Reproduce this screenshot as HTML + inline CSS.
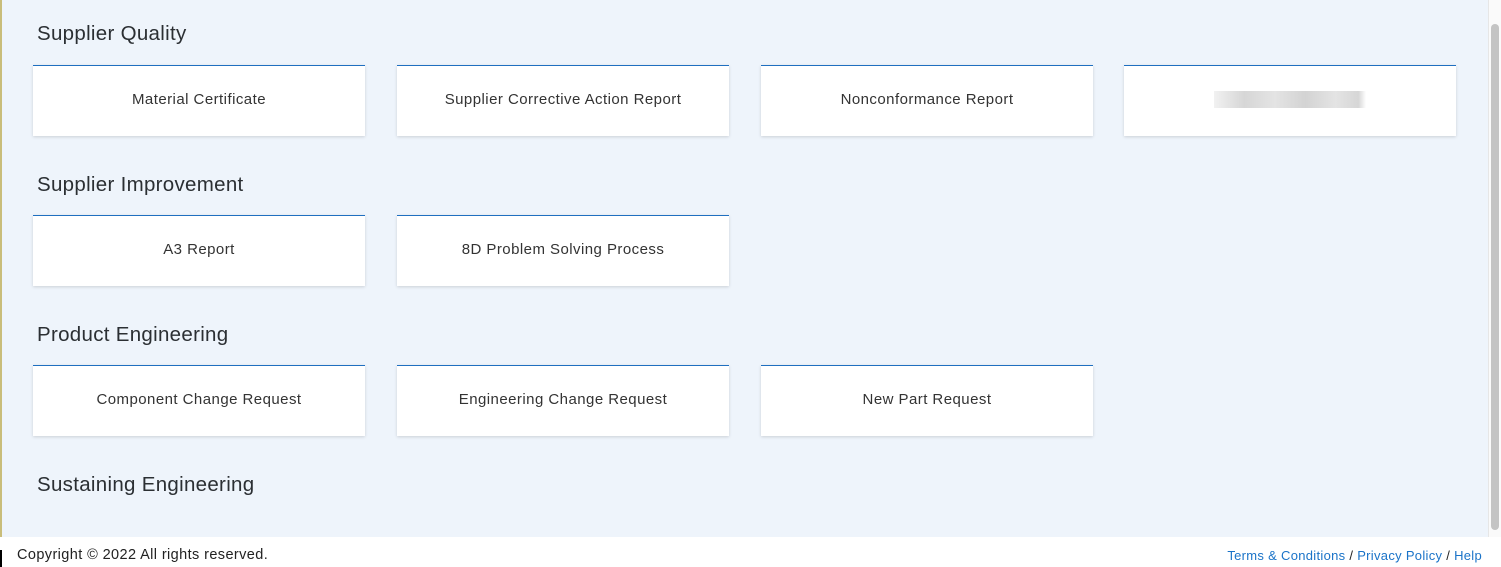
<!DOCTYPE html>
<html><head><meta charset="utf-8"><style>
*{margin:0;padding:0;box-sizing:border-box}
body{width:1501px;height:567px;overflow:hidden;background:#fff;font-family:"Liberation Sans",sans-serif;position:relative}
.main{position:absolute;left:0;top:0;width:1488px;height:537px;background:#eef4fb;border-left:2px solid #c9bd7a}
.sb{position:absolute;left:1488px;top:0;width:13px;height:537px;background:#fafafa;border-left:1px solid #e6e6e6}
.thumb{position:absolute;left:1491px;top:24px;width:8px;height:506px;background:#c4c4c4;border-radius:4px}
h2{position:absolute;left:37px;font-size:20.5px;font-weight:normal;color:#2b2f33;letter-spacing:.3px}
.c{position:absolute;width:332px;height:71px;background:#fff;box-shadow:0 1px 3px rgba(0,0,0,.15);display:flex;align-items:center;justify-content:center;font-size:15px;color:#333;letter-spacing:.45px;padding-bottom:2px}
.c::before{content:"";position:absolute;left:0;top:0;right:0;height:1px;background:#1f6fc0}
.blur{width:152px;height:17px;background:linear-gradient(90deg,#eee,#ccc 20%,#ddd 40%,#c8c8c8 60%,#ddd 80%,#ccc 95%,#fff);opacity:.8}
.foot{position:absolute;top:547px;font-size:14.5px;color:#222;letter-spacing:.4px}
.foot a{color:#1a73c8;text-decoration:none}
</style></head><body>
<div class="main"></div>
<div class="sb"></div><div class="thumb"></div>
<h2 style="top:22px">Supplier Quality</h2>
<div class="c" style="left:33px;top:65px">Material Certificate</div>
<div class="c" style="left:397px;top:65px">Supplier Corrective Action Report</div>
<div class="c" style="left:761px;top:65px">Nonconformance Report</div>
<div class="c" style="left:1124px;top:65px"><div class="blur"></div></div>
<h2 style="top:173px">Supplier Improvement</h2>
<div class="c" style="left:33px;top:215px">A3 Report</div>
<div class="c" style="left:397px;top:215px">8D Problem Solving Process</div>
<h2 style="top:323px">Product Engineering</h2>
<div class="c" style="left:33px;top:365px">Component Change Request</div>
<div class="c" style="left:397px;top:365px">Engineering Change Request</div>
<div class="c" style="left:761px;top:365px">New Part Request</div>
<h2 style="top:473px">Sustaining Engineering</h2>
<div style="position:absolute;left:0;top:550px;width:2px;height:17px;background:#000"></div>
<div class="foot" style="left:17px">Copyright © 2022 All rights reserved.</div>
<div class="foot" style="right:19px;top:548px;font-size:13px;letter-spacing:.3px"><a>Terms &amp; Conditions</a> / <a>Privacy Policy</a> / <a>Help</a></div>
</body></html>
